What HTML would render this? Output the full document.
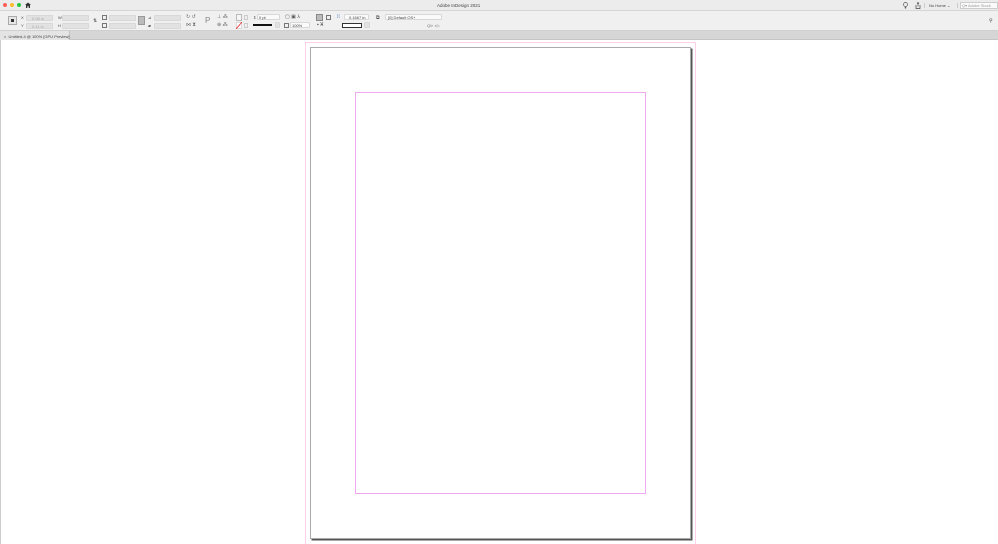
<!DOCTYPE html>
<html style="width:998px;height:544px;overflow:hidden"><head><meta charset="utf-8"><style>
*{margin:0;padding:0;box-sizing:border-box}
body{width:998px;height:544px;overflow:hidden;background:#fff;font-family:"Liberation Sans",sans-serif;position:relative}
.a{position:absolute}
.f{position:absolute;background:#e2e2e2;border:1px solid #d8d8d8;height:6px;border-radius:1px}
.t{position:absolute;font-size:4px;color:#444;white-space:nowrap}
.i{position:absolute;border:1px solid #777;width:5px;height:5px}
</style></head><body>
<div class="a" style="left:0;top:0;width:998px;height:11px;background:#ececec;border-bottom:1px solid #d5d5d5"></div>
<div class="a" style="left:3px;top:3px;width:4px;height:4px;border-radius:50%;background:#fe5f57"></div>
<div class="a" style="left:10px;top:3px;width:4px;height:4px;border-radius:50%;background:#febc2e"></div>
<div class="a" style="left:17px;top:3px;width:4px;height:4px;border-radius:50%;background:#28c840"></div>
<svg class="a" style="left:25px;top:2px" width="6" height="6" viewBox="0 0 6 6"><path d="M0 3L3 0.5L6 3H5V6H3.7V4.2H2.3V6H1V3Z" fill="#333"/></svg>
<div class="t" style="left:437px;top:3px;font-size:4.5px">Adobe InDesign 2021</div>
<svg class="a" style="left:903px;top:2px" width="5" height="7"><circle cx="2.5" cy="2.5" r="2" fill="none" stroke="#555" stroke-width=".7"/><path d="M1.8 5h1.4v1.5h-1.4z" fill="#555"/></svg>
<svg class="a" style="left:915px;top:2px" width="6" height="7"><path d="M1 3v3.5h4V3M3 0.5v4M2 1.5l1-1 1 1" fill="none" stroke="#444" stroke-width=".7"/></svg>
<div class="a" style="left:924px;top:3px;width:1px;height:5px;background:#ccc"></div>
<div class="t" style="left:929px;top:3px">No Home ⌄</div>
<div class="a" style="left:957px;top:3px;width:1px;height:5px;background:#ccc"></div>
<div class="a" style="left:960px;top:2px;width:38px;height:7px;background:#fafafa;border:1px solid #ccc"></div>
<div class="t" style="left:962px;top:3px;color:#999">Q▾ Adobe Stock</div>
<div class="a" style="left:0;top:11px;width:998px;height:20px;background:#f0f0f0;border-bottom:1px solid #d0d0d0"></div>
<div class="a" style="left:8px;top:16px;width:9px;height:9px;border:1px solid #aaa;background:#e6e6e6"></div>
<div class="a" style="left:11px;top:19px;width:3px;height:3px;background:#333"></div>
<div class="t" style="left:21px;top:15px">X</div><div class="t" style="left:21px;top:23px">Y</div>
<div class="f" style="left:26px;top:15px;width:27px"></div><div class="f" style="left:26px;top:23px;width:27px"></div>
<div class="t" style="left:32px;top:15.5px;color:#aaa">0.08 in</div><div class="t" style="left:32px;top:23.5px;color:#aaa">0.11 in</div>
<div class="t" style="left:58px;top:15px">W</div><div class="t" style="left:58px;top:23px">H</div>
<div class="f" style="left:62px;top:15px;width:27px"></div><div class="f" style="left:62px;top:23px;width:27px"></div>
<div class="t" style="left:93px;top:18px;font-size:5px">⇅</div>
<div class="i" style="left:102px;top:15px"></div><div class="i" style="left:102px;top:23px"></div>
<div class="f" style="left:109px;top:15px;width:27px"></div><div class="f" style="left:109px;top:23px;width:27px"></div>
<div class="a" style="left:138px;top:16px;width:7px;height:9px;background:#bbb;border:1px solid #999"></div>
<div class="t" style="left:148px;top:15px">⊿</div><div class="t" style="left:148px;top:23px">▰</div>
<div class="f" style="left:154px;top:15px;width:27px"></div><div class="f" style="left:154px;top:23px;width:27px"></div>
<div class="t" style="left:186px;top:14px;font-size:5px;color:#666">↻ ↺</div>
<div class="t" style="left:186px;top:22px;font-size:5px;color:#666">⋈ ⧗</div>
<div class="t" style="left:205px;top:16px;font-size:8px;color:#888">P</div>
<div class="t" style="left:217px;top:14px;font-size:5px;color:#666">⊥ ⁂</div>
<div class="t" style="left:217px;top:22px;font-size:5px;color:#666">⊕ ⁂</div>
<div class="a" style="left:236px;top:14px;width:6px;height:7px;background:#f6f6f6;border:1px solid #bbb"></div>
<div class="a" style="left:244px;top:15px;width:4px;height:5px;border:1px solid #ccc"></div>
<svg class="a" style="left:236px;top:22px" width="6" height="7"><rect x=".5" y=".5" width="5" height="6" fill="#fff" stroke="#bbb" stroke-width=".5"/><path d="M0 7L6 0" stroke="#e22" stroke-width=".8"/></svg>
<div class="a" style="left:244px;top:23px;width:4px;height:5px;border:1px solid #ccc"></div>
<div class="t" style="left:253px;top:15px">⇕</div>
<div class="f" style="left:257px;top:14px;width:23px;background:#fafafa"></div>
<div class="t" style="left:259px;top:15px">0 pt</div>
<div class="a" style="left:253px;top:24px;width:19px;height:2px;background:#111"></div>
<div class="f" style="left:275px;top:22px;width:5px"></div>
<div class="i" style="left:284px;top:23px"></div>
<div class="f" style="left:290px;top:22px;width:20px;background:#fafafa"></div>
<div class="t" style="left:292px;top:23px">100%</div>
<div class="t" style="left:285px;top:14px;font-size:5px;color:#555">▢ ▣ ⅄</div>
<div class="a" style="left:316px;top:14px;width:7px;height:7px;background:#bbb;border:1px solid #888"></div>
<div class="i" style="left:326px;top:15px"></div>
<div class="t" style="left:317px;top:22px;font-size:5px">▪ Ӿ</div>
<div class="t" style="left:337px;top:14px;color:#36c;font-size:5px">⁞⁞</div>
<div class="f" style="left:344px;top:14px;width:25px;background:#fafafa"></div>
<div class="t" style="left:349px;top:15px">0.1667 in</div>
<div class="a" style="left:342px;top:23px;width:20px;height:5px;border:1px solid #333;background:#fff"></div>
<div class="f" style="left:364px;top:22px;width:6px"></div>
<div class="t" style="left:376px;top:15px;font-size:5px">⧉</div>
<div class="f" style="left:385px;top:14px;width:57px;background:#fafafa"></div>
<div class="t" style="left:388px;top:15px">[0] Default OS+</div>
<div class="t" style="left:427px;top:23px;color:#777">Q⊳ ⌕▷</div>
<div class="t" style="left:989px;top:18px;font-size:5px">⚲</div>
<div class="a" style="left:0;top:31px;width:998px;height:9px;background:#d6d6d6;border-bottom:1px solid #c6c6c6"></div>
<div class="a" style="left:0;top:31px;width:70px;height:9px;background:#e4e4e4;border-right:1px solid #c4c4c4"></div>
<div class="t" style="left:4px;top:33.5px">×&nbsp; Untitled-4 @ 100% [GPU Preview]</div>
<div class="a" style="left:0;top:40px;width:1px;height:504px;background:#ccc"></div>
<div class="a" style="left:305px;top:42px;width:391px;height:520px;border:1px solid #ffd0e6"></div>
<div class="a" style="left:310px;top:47px;width:381px;height:492px;border:1px solid #aaa;box-shadow:1.5px 1.5px 0 #555"></div>
<div class="a" style="left:355px;top:92px;width:291px;height:402px;border:1px solid #f0a8f0"></div>
</body></html>
